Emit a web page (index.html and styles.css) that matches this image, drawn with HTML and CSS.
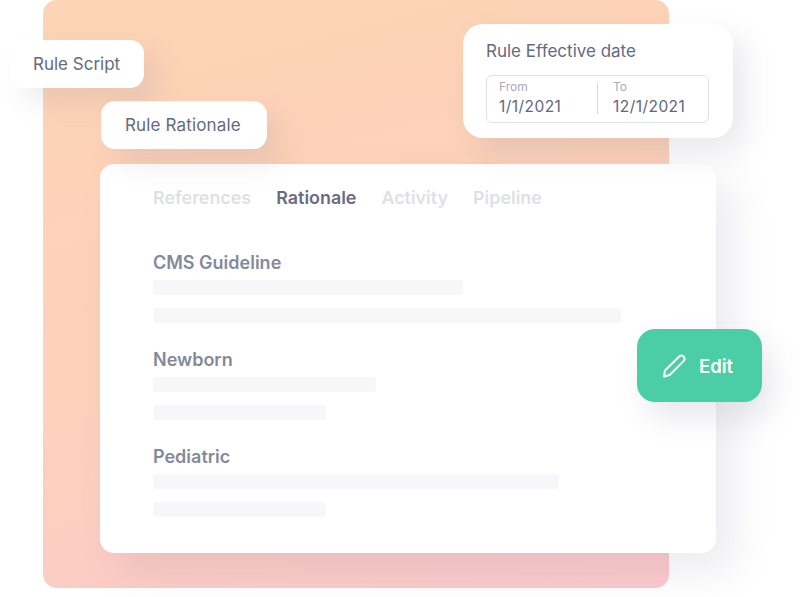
FILE: index.html
```html
<!DOCTYPE html>
<html lang="en">
<head>
    <meta charset="UTF-8">
    <meta name="viewport" content="width=device-width, initial-scale=1.0">
    <title>Rule Rationale</title>
    <link rel="stylesheet" href="styles.css">
</head>
<body>
    <div class="panel">
        <div class="card">
            <div class="tabs">
                <span class="tab">References</span>
                <span class="tab active">Rationale</span>
                <span class="tab">Activity</span>
                <span class="tab">Pipeline</span>
            </div>

            <section class="block">
                <h3>CMS Guideline</h3>
                <div class="bar w-310"></div>
                <div class="bar w-468"></div>
            </section>
            <section class="block">
                <h3>Newborn</h3>
                <div class="bar w-223"></div>
                <div class="bar w-173"></div>
            </section>
            <section class="block">
                <h3>Pediatric</h3>
                <div class="bar w-406"></div>
                <div class="bar w-173"></div>
            </section>
        </div>
    </div>

    <div class="chip chip-script">Rule Script</div>
    <div class="chip chip-rationale">Rule Rationale</div>

    <div class="date-card">
        <div class="date-title">Rule Effective date</div>
        <div class="date-field">
            <div class="date-col from">
                <span class="date-label">From</span>
                <span class="date-value">1/1/2021</span>
            </div>
            <div class="date-col to">
                <span class="date-label">To</span>
                <span class="date-value">12/1/2021</span>
            </div>
        </div>
    </div>

    <div class="edit-btn">
        <svg class="edit-icon" width="24" height="24" viewBox="0 0 24 24" fill="none" stroke="#fff" stroke-width="2" stroke-linejoin="round" stroke-linecap="round">
            <path d="M2 22.5 L3 16.5 L17.5 2.2 Q19.5 0.8 21.5 2.4 Q23.4 4.4 22 6.6 L7.6 21 Z"/>
        </svg>
        <span>Edit</span>
    </div>
</body>
</html>
```

FILE: styles.css
```css
html, body { margin: 0; padding: 0; }
body { width: 800px; height: 597px; position: relative; overflow: hidden; background-color: #fff; font-family: 'Inter', 'Liberation Sans', sans-serif; }

.panel { width: 626px; height: 588px; margin-left: 43px; padding-top: 164px; box-sizing: border-box; border-radius: 14px; background: linear-gradient(165deg, #fdd4b5 0%, #fdd1bb 55%, #fbc9cd 100%); }

.card { width: 616px; height: 389px; margin-left: 57px; padding: 23px 53px 0; box-sizing: border-box; background-color: #fff; border-radius: 14px; box-shadow: 18px 18px 40px rgba(96,100,130,0.12); }

.tabs { display: flex; gap: 25px; height: 22px; line-height: 22px; margin-bottom: 39px; }
.tab { font-size: 17.9px; font-weight: 600; color: #dfe0e6; }
.tab.active { color: #686c7e; }

.block { height: 97px; }
.block h3 { margin: 0 0 8px; height: 21px; line-height: 23px; padding-top: 3px; font-size: 18px; font-weight: 600; color: #858a9a; }
.bar { height: 15px; margin-bottom: 13px; border-radius: 3px; background-color: #f7f7f9; }
.w-310 { width: 310px; }
.w-468 { width: 468px; }
.w-223 { width: 223px; }
.w-173 { width: 173px; }
.w-406 { width: 406px; }

.chip { position: absolute; height: 48px; line-height: 49px; box-sizing: border-box; background-color: #fff; border-radius: 14px; font-size: 17px; color: #666a7d; box-shadow: 14px 14px 28px rgba(96,100,130,0.12); }
.chip-script { left: 10px; top: 40px; width: 134px; padding-left: 23px; }
.chip-rationale { left: 101px; top: 101px; width: 166px; padding-left: 24px; letter-spacing: 0.15px; }

.date-card { position: absolute; left: 463px; top: 24px; width: 270px; height: 114px; padding: 17px 23px 0; box-sizing: border-box; background-color: #fff; border-radius: 20px; box-shadow: 12px 14px 30px rgba(96,100,130,0.14); }
.date-title { height: 20px; line-height: 20px; font-size: 17px; color: #666a7d; margin-bottom: 14px; }
.date-field { display: flex; width: 223px; height: 48px; box-sizing: border-box; border: 1px solid #dfe1e8; border-radius: 6px; padding-top: 4px; }
.date-col { display: flex; flex-direction: column; padding-left: 12px; }
.date-col.from { width: 98px; border-right: 1px solid #d6d8df; height: 31px; margin-top: 3px; }
.date-col.to { padding-left: 15px; margin-top: 3px; }
.date-label { font-size: 12px; line-height: 14px; margin-top: -3px; color: #a8abb8; }
.date-value { font-size: 15.5px; line-height: 20px; margin-top: 3px; color: #62667a; letter-spacing: 0.45px; }

.edit-btn { position: absolute; left: 637px; top: 329px; width: 125px; height: 73px; display: flex; align-items: center; padding-left: 25px; gap: 13px; box-sizing: border-box; background-color: #4bcea5; border-radius: 18px; box-shadow: 10px 16px 30px rgba(96,100,130,0.14); color: #fff; font-size: 18.5px; font-weight: 600; }
.edit-icon { flex: none; }
```
